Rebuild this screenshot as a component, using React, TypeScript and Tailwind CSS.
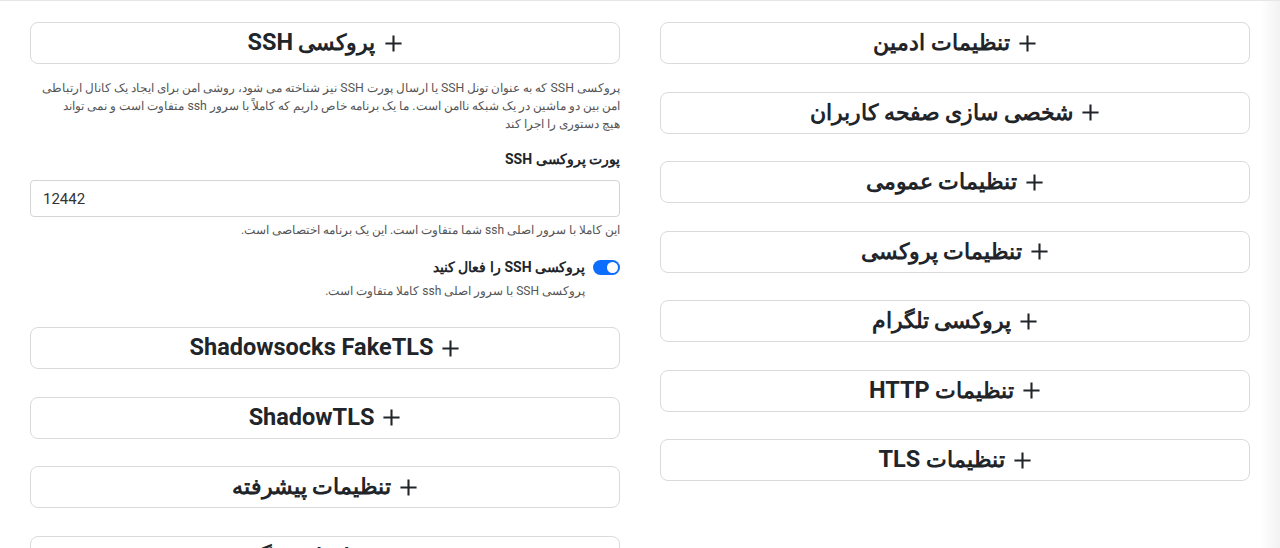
import React from "react";

const Plus = () => (
  <svg width="19" height="19" viewBox="0 0 20 20" className="shrink-0">
    <path d="M10 1.5v17M1.5 10h17" stroke="currentColor" strokeWidth="2.2" />
  </svg>
);

// latin words in the titles render a little larger in the original font
const Title = ({ text }: { text: string }) => (
  <span>
    {text.split(/([A-Za-z][A-Za-z ]*[A-Za-z])/).map((part, i) =>
      /[A-Za-z]/.test(part) ? (
        <span key={i} className="text-[23.5px]">
          {part}
        </span>
      ) : (
        part
      ),
    )}
  </span>
);

const SectionButton = ({ title }: { title: string }) => (
  <button className="flex h-[42px] w-full items-center justify-center gap-2 rounded-lg border border-[#dadada] bg-white text-[22px] font-bold leading-none text-[#212529]">
    <Plus />
    <Title text={title} />
  </button>
);

const rightSections = [
  "تنظیمات ادمین",
  "شخصی سازی صفحه کاربران",
  "تنظیمات عمومی",
  "تنظیمات پروکسی",
  "پروکسی تلگرام",
  "تنظیمات HTTP",
  "تنظیمات TLS",
];

const leftSections = [
  "Shadowsocks FakeTLS",
  "ShadowTLS",
  "تنظیمات پیشرفته",
  "تنظیمات دیگر",
];

export default function App() {
  return (
    <div
      dir="rtl"
      className="h-[548px] overflow-hidden border-t border-[#e6e6e6] bg-[linear-gradient(to_left,#f2f2f2,#ffffff_20px)] font-['Roboto','Noto_Sans',sans-serif] text-[#212529]"
    >
      <div className="grid grid-cols-2 gap-10 px-[30px] pt-[21px]">
        {/* right column */}
        <div className="flex flex-col gap-[27.5px]">
          {rightSections.map((s) => (
            <SectionButton key={s} title={s} />
          ))}
        </div>

        {/* left column */}
        <div className="flex flex-col">
          <SectionButton title="پروکسی SSH" />

          <p className="mt-[15px] text-[12.3px] leading-[18px] text-[#555]">
            پروکسی SSH که به عنوان تونل SSH یا ارسال پورت SSH نیز شناخته می
            شود، روشی امن برای ایجاد یک کانال ارتباطی امن بین دو ماشین در یک
            شبکه ناامن است. ما یک برنامه خاص داریم که کاملاً با سرور ssh متفاوت
            است و نمی تواند
            <br />
            هیچ دستوری را اجرا کند
          </p>

          <label className="mt-[16px] text-[14px] font-bold leading-[20px]">
            پورت پروکسی SSH
          </label>
          <input
            dir="ltr"
            defaultValue="12442"
            className="mt-[11px] h-[37px] w-full rounded-[4px] border border-[#d4d4d4] px-3 text-[15px] text-[#333] outline-none"
          />
          <p className="mt-[5px] text-[12px] leading-[16px] text-[#555]">
            این کاملا با سرور اصلی ssh شما متفاوت است. این یک برنامه اختصاصی
            است.
          </p>

          <div className="mt-[19px] flex items-center gap-2">
            <span className="flex h-[15px] w-[27px] items-center justify-start rounded-full bg-[#0d6efd] px-[2px]">
              <span className="ml-auto h-[11px] w-[11px] rounded-full bg-white" />
            </span>
            <span className="text-[14px] font-bold leading-[20px]">
              پروکسی SSH را فعال کنید
            </span>
          </div>
          <p className="mr-[35px] mt-[6px] text-[12px] leading-[16px] text-[#555]">
            پروکسی SSH با سرور اصلی ssh کاملا متفاوت است.
          </p>

          <div className="mt-[28px] flex flex-col gap-[27.5px]">
            {leftSections.map((s) => (
              <SectionButton key={s} title={s} />
            ))}
          </div>
        </div>
      </div>
    </div>
  );
}
